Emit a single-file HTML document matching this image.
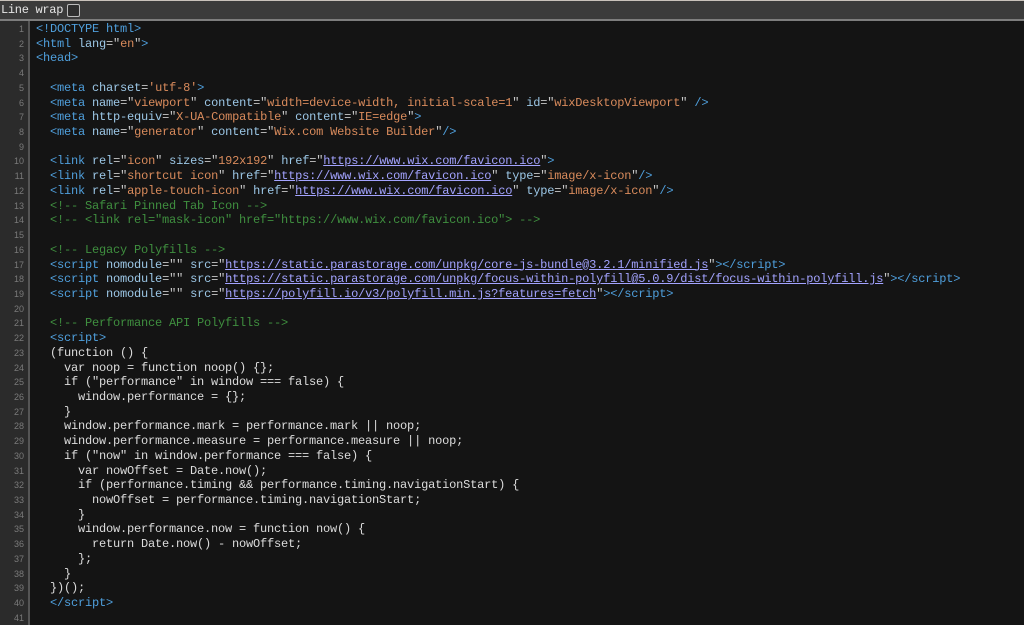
<!DOCTYPE html>
<html><head><meta charset="utf-8"><style>
html,body{margin:0;padding:0;background:#141414;width:1024px;height:625px;overflow:hidden}
#top{position:absolute;left:0;top:0;width:1024px;height:1px;background:#c9c2bb}
#bar{position:absolute;left:0;top:1px;width:1024px;height:18px;background:#3b3b3b;font:12px "Liberation Mono",monospace;color:#e6e6e6}
#bar span{position:absolute;left:1px;top:2px;letter-spacing:-0.3px}
#cb{position:absolute;left:67px;top:3px;width:11px;height:11px;border:1px solid #bbb;border-radius:2px;background:#2e2e2e}
#sep{position:absolute;left:0;top:19px;width:1024px;height:2px;background:#7d7d7d}
#gut{position:absolute;left:0;top:21px;width:28px;height:604px;background:#2b2b2b;border-right:2px solid #555}
#nums{position:absolute;left:0;top:22px;width:24px;text-align:right;font:9px "Liberation Sans",sans-serif;color:#7a7a7a}
#nums div,#code div{height:14.73px;line-height:14.73px}
#code{position:absolute;left:36px;top:22px;font:12px "Liberation Mono",monospace;letter-spacing:-0.2px;color:#dcdcdc}
#code div{white-space:pre}
.t{color:#4f9fdc}.a{color:#9cc7e6}.v{color:#d98b5c}.c{color:#3f8f3f}.u{color:#a3a3ff;text-decoration:underline}.q{color:#c8c8c8}
</style></head><body>
<div id="top"></div>
<div id="bar"><span>Line wrap</span><div id="cb"></div></div>
<div id="sep"></div>
<div id="gut"></div>
<div id="nums">
<div>1</div><div>2</div><div>3</div><div>4</div><div>5</div><div>6</div><div>7</div><div>8</div><div>9</div><div>10</div><div>11</div><div>12</div><div>13</div><div>14</div><div>15</div><div>16</div><div>17</div><div>18</div><div>19</div><div>20</div><div>21</div><div>22</div><div>23</div><div>24</div><div>25</div><div>26</div><div>27</div><div>28</div><div>29</div><div>30</div><div>31</div><div>32</div><div>33</div><div>34</div><div>35</div><div>36</div><div>37</div><div>38</div><div>39</div><div>40</div><div>41</div>
</div>
<div id="code">
<div><span class="t">&lt;!DOCTYPE html&gt;</span></div>
<div><span class="t">&lt;html</span> <span class="a">lang</span><span class="q">="</span><span class="v">en</span><span class="q">"</span><span class="t">&gt;</span></div>
<div><span class="t">&lt;head&gt;</span></div>
<div> </div>
<div>  <span class="t">&lt;meta</span> <span class="a">charset</span><span class="q">=</span><span class="v">'utf-8'</span><span class="t">&gt;</span></div>
<div>  <span class="t">&lt;meta</span> <span class="a">name</span><span class="q">="</span><span class="v">viewport</span><span class="q">"</span> <span class="a">content</span><span class="q">="</span><span class="v">width=device-width, initial-scale=1</span><span class="q">"</span> <span class="a">id</span><span class="q">="</span><span class="v">wixDesktopViewport</span><span class="q">"</span> <span class="t">/&gt;</span></div>
<div>  <span class="t">&lt;meta</span> <span class="a">http-equiv</span><span class="q">="</span><span class="v">X-UA-Compatible</span><span class="q">"</span> <span class="a">content</span><span class="q">="</span><span class="v">IE=edge</span><span class="q">"</span><span class="t">&gt;</span></div>
<div>  <span class="t">&lt;meta</span> <span class="a">name</span><span class="q">="</span><span class="v">generator</span><span class="q">"</span> <span class="a">content</span><span class="q">="</span><span class="v">Wix.com Website Builder</span><span class="q">"</span><span class="t">/&gt;</span></div>
<div> </div>
<div>  <span class="t">&lt;link</span> <span class="a">rel</span><span class="q">="</span><span class="v">icon</span><span class="q">"</span> <span class="a">sizes</span><span class="q">="</span><span class="v">192x192</span><span class="q">"</span> <span class="a">href</span><span class="q">="</span><span class="u">https://www.wix.com/favicon.ico</span><span class="q">"</span><span class="t">&gt;</span></div>
<div>  <span class="t">&lt;link</span> <span class="a">rel</span><span class="q">="</span><span class="v">shortcut icon</span><span class="q">"</span> <span class="a">href</span><span class="q">="</span><span class="u">https://www.wix.com/favicon.ico</span><span class="q">"</span> <span class="a">type</span><span class="q">="</span><span class="v">image/x-icon</span><span class="q">"</span><span class="t">/&gt;</span></div>
<div>  <span class="t">&lt;link</span> <span class="a">rel</span><span class="q">="</span><span class="v">apple-touch-icon</span><span class="q">"</span> <span class="a">href</span><span class="q">="</span><span class="u">https://www.wix.com/favicon.ico</span><span class="q">"</span> <span class="a">type</span><span class="q">="</span><span class="v">image/x-icon</span><span class="q">"</span><span class="t">/&gt;</span></div>
<div>  <span class="c">&lt;!-- Safari Pinned Tab Icon --&gt;</span></div>
<div>  <span class="c">&lt;!-- &lt;link rel="mask-icon" href="https://www.wix.com/favicon.ico"&gt; --&gt;</span></div>
<div> </div>
<div>  <span class="c">&lt;!-- Legacy Polyfills --&gt;</span></div>
<div>  <span class="t">&lt;script</span> <span class="a">nomodule</span><span class="q">=""</span> <span class="a">src</span><span class="q">="</span><span class="u">https://static.parastorage.com/unpkg/core-js-bundle@3.2.1/minified.js</span><span class="q">"</span><span class="t">&gt;&lt;/script&gt;</span></div>
<div>  <span class="t">&lt;script</span> <span class="a">nomodule</span><span class="q">=""</span> <span class="a">src</span><span class="q">="</span><span class="u">https://static.parastorage.com/unpkg/focus-within-polyfill@5.0.9/dist/focus-within-polyfill.js</span><span class="q">"</span><span class="t">&gt;&lt;/script&gt;</span></div>
<div>  <span class="t">&lt;script</span> <span class="a">nomodule</span><span class="q">=""</span> <span class="a">src</span><span class="q">="</span><span class="u">https://polyfill.io/v3/polyfill.min.js?features=fetch</span><span class="q">"</span><span class="t">&gt;&lt;/script&gt;</span></div>
<div> </div>
<div>  <span class="c">&lt;!-- Performance API Polyfills --&gt;</span></div>
<div>  <span class="t">&lt;script&gt;</span></div>
<div>  (function () {</div>
<div>    var noop = function noop() {};</div>
<div>    if ("performance" in window === false) {</div>
<div>      window.performance = {};</div>
<div>    }</div>
<div>    window.performance.mark = performance.mark || noop;</div>
<div>    window.performance.measure = performance.measure || noop;</div>
<div>    if ("now" in window.performance === false) {</div>
<div>      var nowOffset = Date.now();</div>
<div>      if (performance.timing &amp;&amp; performance.timing.navigationStart) {</div>
<div>        nowOffset = performance.timing.navigationStart;</div>
<div>      }</div>
<div>      window.performance.now = function now() {</div>
<div>        return Date.now() - nowOffset;</div>
<div>      };</div>
<div>    }</div>
<div>  })();</div>
<div>  <span class="t">&lt;/script&gt;</span></div>
<div> </div>
</div>
</body></html>
